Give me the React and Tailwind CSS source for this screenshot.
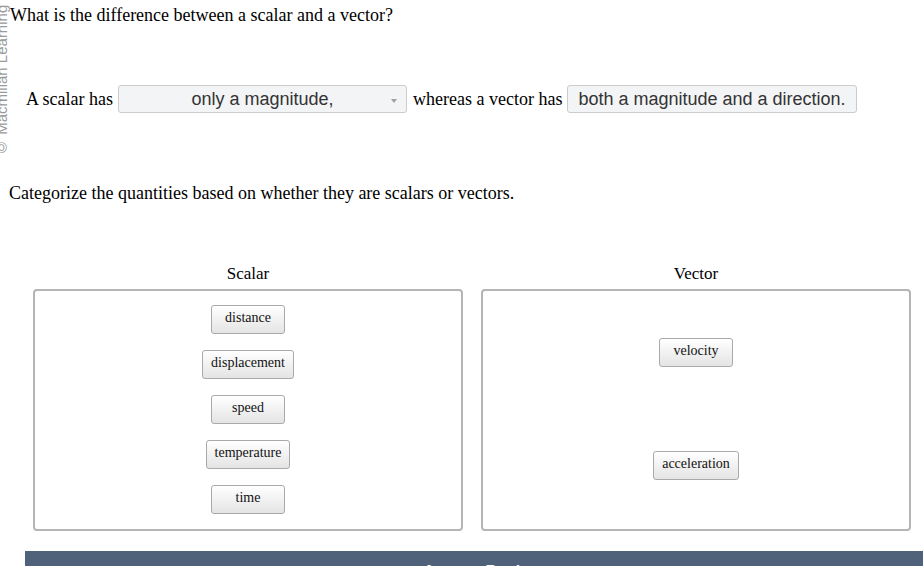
import React from "react";

const scalars = ["distance", "displacement", "speed", "temperature", "time"];
const vectors = ["velocity", "acceleration"];

function Chip({ label }) {
    return (
        <div className="flex h-[29px] min-w-[74px] items-center justify-center rounded-[3px] border border-[#a9a9a9] bg-gradient-to-b from-white to-[#e4e4e4] px-[8px] pb-[4px] text-[14px] leading-[16px] text-[#111]">
            {label}
        </div>
    );
}

function Bin({ title, children, className }) {
    return (
        <div className="flex w-[430px] flex-col items-center">
            <div className="mb-[5px] text-[17px] leading-[21px]">{title}</div>
            <div className={`flex h-[242px] w-full flex-col items-center rounded-[4px] border-2 border-[#b5b5b5] ${className}`}>
                {children}
            </div>
        </div>
    );
}

export default function App() {
    return (
        <div className="relative h-[566px] w-[923px] overflow-hidden bg-white font-['Liberation_Serif',serif] text-black">
            {/* copyright strip running up the left edge */}
            <div className="absolute left-[-6px] top-[10px] h-[146px] rotate-180 text-[15px] leading-[16px] text-[#9a9a9a] font-['Liberation_Sans',Arial,sans-serif] [writing-mode:vertical-rl] whitespace-nowrap">
                © Macmillan Learning
            </div>

            <h1 className="pl-[10px] pt-[5px] text-[18px] leading-[21px] font-normal">
                What is the difference between a scalar and a vector?
            </h1>

            <div className="ml-[26px] mt-[59px] flex h-[28px] items-center text-[18px]">
                <span>A scalar has</span>
                <div className="relative ml-[5px] flex h-[28px] w-[289px] items-center justify-center rounded-[3px] border border-[#cbcbcb] bg-[#f3f4f6] font-['Liberation_Sans',Arial,sans-serif] text-[18px] text-[#333]">
                    only a magnitude,
                    <span className="absolute right-[9px] top-[13px] h-0 w-0 border-x-[3.5px] border-t-[4px] border-x-transparent border-t-[#a0a0a0]" />
                </div>
                <span className="ml-[6px]">whereas a vector has</span>
                <div className="ml-[5px] flex h-[28px] w-[290px] items-center rounded-[3px] border border-[#cbcbcb] bg-[#f3f4f6] pl-[10px] font-['Liberation_Sans',Arial,sans-serif] text-[18px] text-[#333]">
                    both a magnitude and a direction.
                </div>
            </div>

            <p className="mt-[70px] pl-[9px] text-[18px] leading-[21px]">
                Categorize the quantities based on whether they are scalars or vectors.
            </p>

            <div className="ml-[33px] mt-[59px] flex gap-[18px]">
                <Bin title="Scalar" className="gap-[16px] pt-[14px]">
                    {scalars.map((s) => (
                        <Chip key={s} label={s} />
                    ))}
                </Bin>
                <Bin title="Vector" className="gap-[84px] pt-[47px]">
                    {vectors.map((v) => (
                        <Chip key={v} label={v} />
                    ))}
                </Bin>
            </div>

            <div className="ml-[25px] mt-[20px] h-[40px] bg-[#506279] pt-[9px] text-center font-['Liberation_Sans',Arial,sans-serif] text-[16px] font-bold text-white">
                Answer Bank
            </div>
        </div>
    );
}
